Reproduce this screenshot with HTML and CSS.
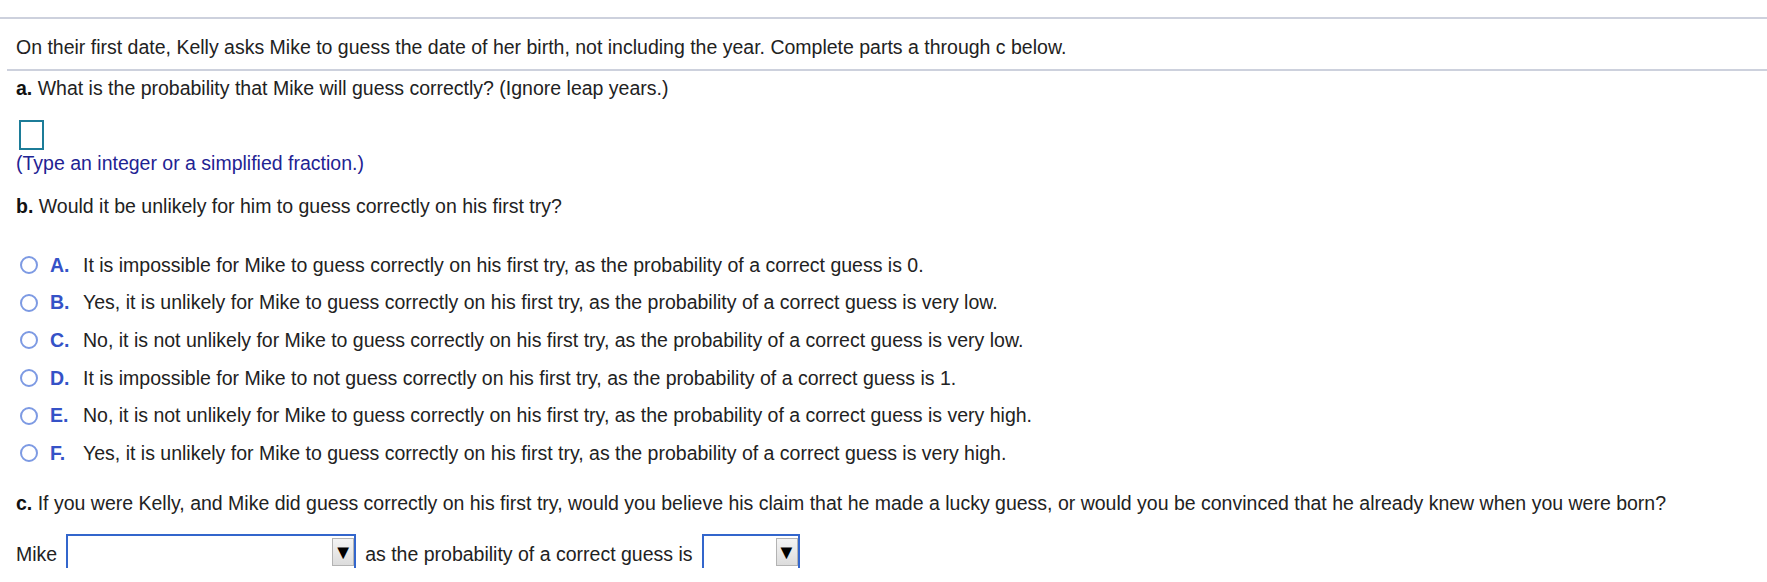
FILE: index.html
```html
<!DOCTYPE html>
<html>
<head>
<meta charset="utf-8">
<link rel="stylesheet" href="styles.css">
</head>
<body>
<div class="page">
  <div class="rule-top"></div>
  <div class="intro">On their first date, Kelly asks Mike to guess the date of her birth, not including the year. Complete parts a through c below.</div>
  <div class="rule-sub"></div>
  <div class="content">
    <p class="q q-a"><b>a.</b> What is the probability that Mike will guess correctly? (Ignore leap years.)</p>
    <div class="answer-box"></div>
    <p class="hint">(Type an integer or a simplified fraction.)</p>
    <p class="q q-b"><b>b.</b> Would it be unlikely for him to guess correctly on his first try?</p>
    <ul class="choices">
      <li class="choice"><span class="radio"></span><span class="letter">A.</span><span class="ctext">It is impossible for Mike to guess correctly on his first try, as the probability of a correct guess is 0.</span></li>
      <li class="choice"><span class="radio"></span><span class="letter">B.</span><span class="ctext">Yes, it is unlikely for Mike to guess correctly on his first try, as the probability of a correct guess is very low.</span></li>
      <li class="choice"><span class="radio"></span><span class="letter">C.</span><span class="ctext">No, it is not unlikely for Mike to guess correctly on his first try, as the probability of a correct guess is very low.</span></li>
      <li class="choice"><span class="radio"></span><span class="letter">D.</span><span class="ctext">It is impossible for Mike to not guess correctly on his first try, as the probability of a correct guess is 1.</span></li>
      <li class="choice"><span class="radio"></span><span class="letter">E.</span><span class="ctext">No, it is not unlikely for Mike to guess correctly on his first try, as the probability of a correct guess is very high.</span></li>
      <li class="choice"><span class="radio"></span><span class="letter">F.</span><span class="ctext">Yes, it is unlikely for Mike to guess correctly on his first try, as the probability of a correct guess is very high.</span></li>
    </ul>
    <p class="q q-c"><b>c.</b> If you were Kelly, and Mike did guess correctly on his first try, would you believe his claim that he made a lucky guess, or would you be convinced that he already knew when you were born?</p>
    <div class="fill-row">
      <span>Mike</span>
      <span class="select select-wide"><span class="arrow">&#9660;</span></span>
      <span>as the probability of a correct guess is</span>
      <span class="select select-narrow"><span class="arrow">&#9660;</span></span>
    </div>
  </div>
</div>
</body>
</html>
```

FILE: styles.css
```css
html, body {
  margin: 0;
  padding: 0;
  background: #ffffff;
}
body {
  font-family: "Liberation Sans", Arial, sans-serif;
  font-size: 19.5px;
  color: #222222;
}
.page {
  padding-top: 17px;
}
.rule-top {
  height: 2px;
  background: #cdd1dd;
}
.intro {
  line-height: 24px;
  padding: 16px 0 10px 16px;
}
.rule-sub {
  height: 2px;
  margin-left: 7px;
  background: #cdd1dd;
}
.content {
  padding-left: 16px;
}
.q {
  margin: 0;
  line-height: 24px;
}
.q b {
  color: #111;
}
.q-a {
  padding-top: 5px;
}
.answer-box {
  width: 21px;
  height: 26px;
  border: 2px solid #1c7c98;
  margin: 20px 0 0 3px;
}
.hint {
  margin: 1px 0 0 0;
  line-height: 24px;
  color: #1f2393;
}
.q-b {
  margin-top: 19px;
}
.choices {
  list-style: none;
  margin: 35px 0 0 0;
  padding: 0;
}
.choice {
  display: flex;
  align-items: center;
  height: 24px;
  margin-bottom: 13.7px;
}
.radio {
  box-sizing: border-box;
  width: 18px;
  height: 18px;
  border: 2px solid #7d9ae3;
  border-radius: 50%;
  margin-left: 4px;
  margin-right: 12px;
  background: #fff;
}
.letter {
  color: #3552c7;
  font-weight: bold;
  width: 33px;
}
.q-c {
  margin-top: 26px;
}
.fill-row {
  display: flex;
  align-items: flex-start;
  gap: 9px;
  margin-top: 19px;
  line-height: 24px;
}
.fill-row > span:not(.select) {
  padding-top: 8px;
}
.select {
  box-sizing: border-box;
  height: 34px;
  border: 2px solid #3366cc;
  border-bottom: none;
  display: flex;
  justify-content: flex-end;
  padding: 2px 0 0 0;
  background: #fff;
}
.select-wide {
  width: 290px;
}
.select-narrow {
  width: 98px;
}
.arrow {
  box-sizing: border-box;
  width: 22px;
  height: 28px;
  border: 1px solid #b3b3b3;
  background: linear-gradient(#f4f4f4, #dcdcdc);
  color: #000;
  font-size: 20px;
  line-height: 26px;
  text-align: center;
}
```
